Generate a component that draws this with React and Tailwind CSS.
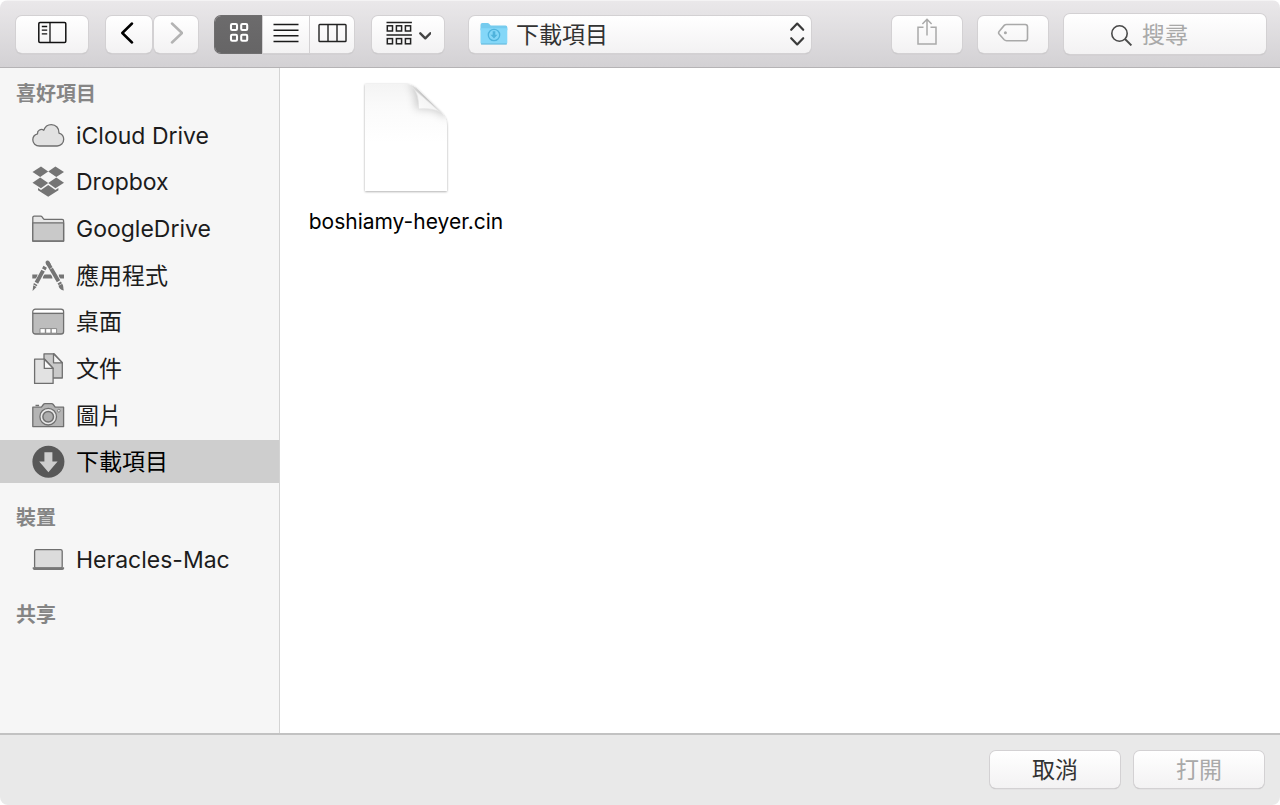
import React from "react";

const control =
  "flex h-[37px] shrink-0 items-center justify-center bg-linear-to-b from-white to-[#f3f2f3] shadow-[0_0_0_1px_#d3d1d3,0_1px_1px_0_#a9a7a9]";

function SidebarToggleIcon() {
  return (
    <svg width="30" height="26" viewBox="0 0 30 26" fill="none" stroke="#111" aria-hidden="true">
      <rect x="1.8" y="1.5" width="27" height="20" rx="1.2" strokeWidth="1.5" />
      <path d="M13 1.500v20" strokeWidth="1.3" />
      <path d="M4.800 5.500h5.400M4.800 9.200h5.400M4.800 12.800h5.400" strokeWidth="1.3" />
    </svg>
  );
}

function ChevronIcon({ flip }) {
  return (
    <svg width="14" height="24" viewBox="0 0 14 24" fill="none" stroke="currentColor" strokeWidth="2.5" strokeLinecap="round" strokeLinejoin="round" aria-hidden="true">
      <path d={flip ? "M3 1.500L13 11L3 20.500" : "M12 1.500L2.300 11L12 20.500"} />
    </svg>
  );
}

function GridIcon() {
  return (
    <svg width="20" height="24" viewBox="0 0 20 24" fill="none" stroke="#fff" strokeWidth="2.100" aria-hidden="true">
      <rect x="2" y="2" width="6" height="6" rx="1.200" />
      <rect x="12.200" y="2" width="6" height="6" rx="1.200" />
      <rect x="2" y="12.800" width="6" height="6" rx="1.200" />
      <rect x="12.200" y="12.800" width="6" height="6" rx="1.200" />
    </svg>
  );
}

function ListIcon() {
  return (
    <svg width="28" height="24" viewBox="0 0 28 24" fill="none" stroke="#1a1a1a" strokeWidth="1.4" aria-hidden="true">
      <path d="M.5 2.500h25M.5 8.200h25M.5 13.800h25M.5 19.500h25" />
    </svg>
  );
}

function ColumnsIcon() {
  return (
    <svg width="30" height="24" viewBox="0 0 30 24" fill="none" stroke="#222" strokeWidth="1.4" aria-hidden="true">
      <rect x="2" y="2.500" width="27" height="17" rx=".8" />
      <path d="M11 2.500v17M20 2.500v17" />
    </svg>
  );
}

function ArrangeIcon() {
  return (
    <svg width="46" height="26" viewBox="0 0 46 26" fill="none" stroke="#222" aria-hidden="true">
      <g transform="translate(1.500 0)">
        <path d="M0 1.500h25.400M0 14h25.400" strokeWidth="1.400" />
        <g strokeWidth="1.500">
          <rect x=".8" y="4.800" width="5.200" height="5.200" />
          <rect x="9.900" y="4.800" width="5.200" height="5.200" />
          <rect x="18.900" y="4.800" width="5.200" height="5.200" />
          <rect x=".8" y="17.600" width="5.200" height="5.200" />
          <rect x="9.900" y="17.600" width="5.200" height="5.200" />
          <rect x="18.900" y="17.600" width="5.200" height="5.200" />
        </g>
        <path d="M33.800 12.300l5 5 5-5" stroke="#444" strokeWidth="2.400" strokeLinecap="round" strokeLinejoin="round" />
      </g>
    </svg>
  );
}

function BlueFolderIcon() {
  return (
    <svg width="28" height="24" viewBox="0 0 28 24" aria-hidden="true">
      <path d="M.5 3Q.5 1 2.300 1h5.200q1 0 1.700.8l1 1.200q.5.600 1.500.600h13.800q1.800 0 1.800 1.600v3H.5z" fill="#75cbee" />
      <path d="M.5 6.200h26.800v14.600q0 1.400-1.400 1.400H1.900q-1.400 0-1.400-1.400z" fill="#84d7f8" />
      <path d="M1 22h25.800" stroke="#62b6da" strokeWidth="1" />
      <circle cx="14" cy="13" r="5.700" fill="none" stroke="#4fb3dc" strokeWidth="1.300" />
      <path d="M12.700 9.200h2.600v3.600h2.200L14 16.600l-3.500-3.800h2.200z" fill="#4fb3dc" />
    </svg>
  );
}

function StepperIcon() {
  return (
    <svg width="16" height="26" viewBox="0 0 16 26" fill="none" stroke="#3a3a3a" strokeWidth="2.200" strokeLinecap="round" strokeLinejoin="round" aria-hidden="true">
      <path d="M2.200 8.800l6-6.200 6 6.200M2.200 17.200l6 6.200 6-6.200" />
    </svg>
  );
}

function ShareIcon() {
  return (
    <svg width="22" height="30" viewBox="0 0 22 30" fill="none" stroke="#a9a9a9" strokeWidth="1.500" aria-hidden="true">
      <path d="M7.500 10.200H2v16.800h18V10.200h-5.500" />
      <path d="M11 18.500V2.500M6.400 7L11 2.300 15.600 7" />
    </svg>
  );
}

function TagIcon() {
  return (
    <svg width="32" height="22" viewBox="0 0 32 22" fill="none" stroke="#a9a9a9" strokeWidth="1.600" aria-hidden="true">
      <path d="M9.500 1.500h18.700q2.300 0 2.300 2.300v11.600q0 2.300-2.300 2.300H9.500Q8.100 17.700 7.200 16.800L2.100 11q-1-1.300 0-2.600L7.200 2.400Q8.100 1.500 9.500 1.500z" />
      <circle cx="8.400" cy="9.700" r="1.500" fill="#a9a9a9" stroke="none" />
    </svg>
  );
}

function SearchIcon() {
  return (
    <svg width="22" height="22" viewBox="0 0 22 22" fill="none" stroke="#4a4a4a" strokeWidth="1.600" aria-hidden="true">
      <circle cx="8.500" cy="9.500" r="7.700" />
      <path d="M14 15l6.400 6.400" strokeWidth="1.900" />
    </svg>
  );
}

function Glyph({ children }) {
  return (
    <svg className="shrink-0" width="34" height="34" viewBox="0 0 34 34" fill="none" stroke="#6f6f6f" strokeWidth="1.300" strokeLinejoin="round" aria-hidden="true">
      {children}
    </svg>
  );
}

const glyphs = {
  cloud: (
    <Glyph>
      <path fill="#e2e2e2" d="M8.500 27C4.500 27 1.800 24.300 1.800 20.800c0-3 2-5.300 4.700-6-.4-3.300 3.600-5.600 6.300-3.600C14 7.600 17 5.600 20.300 5.600c4.600 0 8 3.700 7.700 8.500 2.700.8 4.700 3.300 4.700 6.200 0 3.800-2.900 6.700-6.500 6.700z" />
    </Glyph>
  ),
  dropbox: (
    <Glyph>
      <g fill="#757575" stroke="none">
        <path d="M10 1.500L17.200 6.500 9.200 12.100 1.500 7z" />
        <path d="M24.400 1.500L33 7l-7.700 5.100L17.200 6.500z" />
        <path d="M1.500 17.700l7.700-5.200 8 5.600L10 23.200z" />
        <path d="M33 17.700l-7.700-5.200-8.100 5.600 7.200 5.100z" />
        <path d="M17.200 19.900l7.200 5 3-1.900v2.200L17.200 31.800 7 25.200V23l3 1.900z" />
      </g>
    </Glyph>
  ),
  folder: (
    <Glyph>
      <path fill="#e6e6e6" d="M1.800 29V5.500q0-1.400 1.400-1.400h6.500q.8 0 1.200.6l1.400 2q.4.600 1.200.6h17.700q1.400 0 1.400 1.400V29z" />
      <path fill="#c9c9c9" d="M1.800 10.800h30.800V29H1.800z" />
    </Glyph>
  ),
  apps: (
    <Glyph>
      <path d="M1.300 17.600h5.300M11.800 17.600h9.600M27.800 17.600h5.200" stroke="#757575" strokeWidth="4" />
      <path d="M14.300 8L4.700 25.500" stroke="#f6f6f6" strokeWidth="5.600" />
      <path d="M16.200 3.500L29 25" stroke="#f6f6f6" strokeWidth="6" />
      <g stroke="#757575" strokeWidth="3.900">
        <path d="M14.200 7.800l-1.500 2.700M12.100 11.600L5.400 23.800M4.700 25l-.7 1.300" />
        <path d="M16.500 3.500l11 18.800M28.200 23.500l1.100 1.800" />
        <path d="M16.500 3.500l1 1.700" strokeLinecap="round" />
      </g>
      <path d="M19.300 9.800l3.600-2M11 10l3.800 2.100" stroke="#f6f6f6" strokeWidth=".700" />
      <path d="M2.300 26.200l3.200 1.900-3.900 3.900z" fill="#757575" stroke="none" />
      <path d="M27.500 26.800l3.700-2.100c1.700 2.200.8 4.700 1.700 6.800-2.900-.4-4.700-1.700-5.400-4.700z" fill="#757575" stroke="none" />
    </Glyph>
  ),
  desktop: (
    <Glyph>
      <rect x="1.800" y="4.200" width="30.800" height="24.800" rx="2.600" fill="#bdbdbd" />
      <path d="M2.500 6.600q0-1.700 1.800-1.700h25.800q1.800 0 1.800 1.700v1.200H2.500z" fill="#fff" stroke="none" />
      <path d="M1.800 8.400h30.800" />
      <path d="M9 23.600h16.600v4.600H9z" fill="#fff" stroke="#8a8a8a" strokeWidth="1" />
      <path d="M14.500 23.600v4.600M20.100 23.600v4.600" stroke="#8a8a8a" strokeWidth="1.400" />
    </Glyph>
  ),
  documents: (
    <Glyph>
      <path fill="#c9c9c9" d="M13 1.800h10l8.300 9v15.200H13z" />
      <path fill="#f4f4f4" d="M22.500 1.800v9h8.800z" />
      <path fill="#e2e2e2" d="M3.600 7.200h10.200l8.300 9v15.200H3.600z" />
      <path fill="#fafafa" d="M13.300 7.200v9.200h8.800z" />
    </Glyph>
  ),
  camera: (
    <Glyph>
      <path fill="#b4b4b4" d="M1.800 8.200h8.600l2-2.700q.6-.8 1.600-.8h6.600q1 0 1.600.8l2 2.700h8.400v19.400H1.800z" />
      <path d="M4.500 6.500h3.600" strokeWidth="1.500" />
      <circle cx="17.200" cy="17.700" r="8.300" fill="#e9e9e9" />
      <circle cx="17.200" cy="17.700" r="5.300" fill="#adadad" strokeWidth="1.500" />
      <circle cx="27.800" cy="11.700" r="1.400" fill="#eee" strokeWidth=".800" />
    </Glyph>
  ),
  download: (
    <Glyph>
      <circle cx="17.400" cy="16.800" r="16" fill="#585858" stroke="none" />
      <path d="M13.400 7.300h8v9.300h5.200l-9.200 10.600L8.200 16.600h5.200z" fill="#cecece" stroke="none" />
    </Glyph>
  ),
  laptop: (
    <Glyph>
      <rect x="3.600" y="6.700" width="27.600" height="18.500" rx="1.600" fill="#dcdcdc" />
      <path d="M1.700 24.300h31.400v1q0 1.700-1.700 1.700h-28q-1.700 0-1.700-1.700z" fill="#777" stroke="none" />
    </Glyph>
  ),
};

function PlaceLink({ icon, label, active }) {
  return (
    <a
      href="#"
      aria-current={active ? "page" : undefined}
      className={`flex h-[43px] shrink-0 items-center gap-[11px] pt-[2px] pl-[31px] ${active ? "bg-[#cecece] text-black" : "text-[#1c1c1c]"}`}
    >
      {glyphs[icon]}
      <span className="leading-8 whitespace-nowrap">{label}</span>
    </a>
  );
}

function SectionTitle({ children }) {
  return <h2 className="pl-4 text-[20px] leading-7 font-bold text-[#858585]">{children}</h2>;
}

function FileIcon() {
  return (
    <svg width="88" height="114" viewBox="0 0 88 114" aria-hidden="true">
      <defs>
        <linearGradient id="sheet" x1="0" y1="0" x2="0" y2="1">
          <stop offset="0" stopColor="#f4f4f4" />
          <stop offset=".2" stopColor="#fafafa" />
          <stop offset=".55" stopColor="#fff" />
        </linearGradient>
        <linearGradient id="fold" x1="0" y1="1" x2=".6" y2=".4">
          <stop offset="0" stopColor="#fff" />
          <stop offset="1" stopColor="#f2f2f2" />
        </linearGradient>
        <filter id="lift" x="-10%" y="-10%" width="120%" height="120%">
          <feDropShadow dx="0" dy=".7" stdDeviation="1.100" floodOpacity=".36" />
        </filter>
        <filter id="soft" x="-40%" y="-40%" width="180%" height="180%">
          <feGaussianBlur stdDeviation="4" />
        </filter>
        <clipPath id="page">
          <path d="M3 2h40c6 0 10 2.500 14 6.500L77 28c5 4.500 8 9 8 16v65H3z" />
        </clipPath>
      </defs>
      <path filter="url(#lift)" fill="url(#sheet)" d="M3 2h40c6 0 10 2.500 14 6.500L77 28c5 4.500 8 9 8 16v65H3z" />
      <g clipPath="url(#page)">
        <path filter="url(#soft)" fill="#000" fillOpacity=".2" d="M46 2c6 3 8 11 8 25 11-1 22 0 30 9L90 20 66 0z" />
      </g>
      <path fill="url(#fold)" stroke="#e2e2e2" strokeWidth=".700" d="M49 4.500c5 3 8 10 7.500 22.500 9-.8 16.500 0 22 3.500z" />
    </svg>
  );
}

export default function App() {
  return (
    <div className="flex min-h-screen flex-col overflow-hidden rounded-lg bg-white font-[Inter,'Noto_Sans_CJK_TC',sans-serif] text-[23px] text-[#222]">
      <header className="flex h-[68px] shrink-0 items-center border-t border-b border-t-[#f4f3f4] border-b-[#b5b3b5] bg-linear-to-b from-[#eae8ea] to-[#d3d1d4] pr-[14px] pl-4">
        <button type="button" aria-label="側邊欄" className={`${control} w-[72px] rounded-md`}>
          <SidebarToggleIcon />
        </button>
        <div className="ml-[18px] flex gap-[2px]">
          <button type="button" aria-label="上一頁" className={`${control} w-[46px] rounded-md pr-1 text-black`}>
            <ChevronIcon />
          </button>
          <button type="button" aria-label="下一頁" disabled className={`${control} w-11 rounded-md text-[#b3b3b3]`}>
            <ChevronIcon flip />
          </button>
        </div>
        <div className="ml-[17px] flex">
          <button type="button" aria-label="圖像" aria-pressed="true" className="flex h-[37px] w-12 shrink-0 items-center justify-center rounded-l-md bg-linear-to-b from-[#6c6b6c] to-[#666566] shadow-[0_0_0_1px_#6f6e6f]">
            <GridIcon />
          </button>
          <button type="button" aria-label="列表" aria-pressed="false" className={`${control} w-[47px]`}>
            <ListIcon />
          </button>
          <button type="button" aria-label="直欄" aria-pressed="false" className={`${control} w-11 rounded-r-md`}>
            <ColumnsIcon />
          </button>
        </div>
        <button type="button" aria-label="排列方式" className={`${control} ml-[18px] w-[72px] rounded-md`}>
          <ArrangeIcon />
        </button>
        <div className="relative ml-[25px]">
          <select aria-label="位置" className={`${control} w-[342px] appearance-none rounded-md pt-[2px] pr-10 pl-[47px] text-[#333]`}>
            <option>下載項目</option>
          </select>
          <span className="pointer-events-none absolute inset-0 flex items-center justify-between pr-[6px] pl-[11px]">
            <BlueFolderIcon />
            <StepperIcon />
          </span>
        </div>
        <div className="ml-auto flex items-center gap-4">
          <button type="button" aria-label="分享" disabled className={`${control} w-[70px] rounded-md pb-1`}>
            <ShareIcon />
          </button>
          <button type="button" aria-label="標籤" disabled className={`${control} w-[70px] rounded-md`}>
            <TagIcon />
          </button>
          <label className="flex h-10 w-[202px] items-center gap-[9px] rounded-md bg-linear-to-b from-white to-[#f3f2f3] pt-[2px] pl-[47px] shadow-[0_0_0_1px_#d3d1d3,0_1px_1px_0_#a9a7a9]">
            <SearchIcon />
            <input type="search" aria-label="搜尋" placeholder="搜尋" className="w-0 min-w-0 flex-1 bg-transparent leading-8 outline-none placeholder:text-[#a9a9a9]" />
          </label>
        </div>
      </header>

      <div className="flex flex-1">
        <nav aria-label="側邊欄" className="w-[280px] shrink-0 border-r border-[#d4d4d4] bg-[#f6f6f6] pt-3">
          <SectionTitle>喜好項目</SectionTitle>
          <div className="mt-[5px] flex h-[370px] flex-col justify-between">
            <PlaceLink icon="cloud" label="iCloud Drive" />
            <PlaceLink icon="dropbox" label="Dropbox" />
            <PlaceLink icon="folder" label="GoogleDrive" />
            <PlaceLink icon="apps" label="應用程式" />
            <PlaceLink icon="desktop" label="桌面" />
            <PlaceLink icon="documents" label="文件" />
            <PlaceLink icon="camera" label="圖片" />
            <PlaceLink icon="download" label="下載項目" active />
          </div>
          <div className="pt-[21px]">
            <SectionTitle>裝置</SectionTitle>
            <div className="mt-[5px]">
              <PlaceLink icon="laptop" label="Heracles-Mac" />
            </div>
          </div>
          <div className="pt-[21px]">
            <SectionTitle>共享</SectionTitle>
          </div>
        </nav>
        <main className="flex-1 pt-[14px] pl-[26px]">
          <button type="button" className="flex w-[200px] flex-col items-center gap-[10px] text-black">
            <FileIcon />
            <span className="text-[21px] leading-8 whitespace-nowrap">boshiamy-heyer.cin</span>
          </button>
        </main>
      </div>

      <footer className="flex h-[72px] shrink-0 items-center justify-end gap-[14px] border-t-2 border-[#c2c2c2] bg-[#e9e9e9] pr-4 pb-[2px]">
        <button type="button" className={`${control} w-[130px] rounded-md pt-[2px] text-[#333]`}>取消</button>
        <button type="button" disabled className={`${control} w-[130px] rounded-md pt-[2px] text-[#a9a9a9]`}>打開</button>
      </footer>
    </div>
  );
}
